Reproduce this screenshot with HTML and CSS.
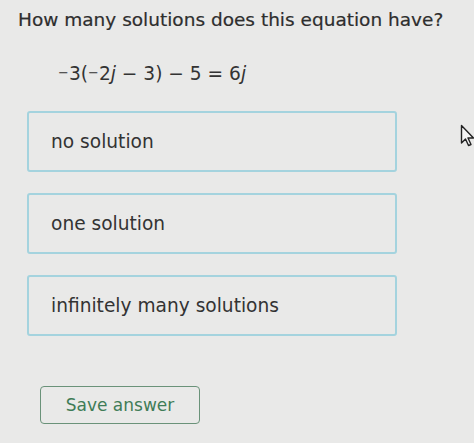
FILE: index.html
```html
<!DOCTYPE html>
<html lang="en">
<head>
<meta charset="utf-8">
<title>Question</title>
<link rel="stylesheet" href="styles.css">
</head>
<body>
<main class="question">
  <h1 class="prompt">How many solutions does this equation have?</h1>
  <p class="equation"><span class="neg">−</span>3(<span class="neg">−</span>2<i>j</i> − 3) − 5 = 6<i>j</i></p>
  <div class="options">
    <div class="option">no solution</div>
    <div class="option">one solution</div>
    <div class="option">infinitely many solutions</div>
  </div>
  <button class="save">Save answer</button>
</main>
<svg class="cursor" width="16" height="24" viewBox="0 0 16 24"><path d="M1.5 1.5 L1.5 19 L5.5 15 L8.5 21.5 L11 20.5 L8 14 L13.5 14 Z" fill="#f4f4f4" stroke="#222" stroke-width="1.4" stroke-linejoin="round"/></svg>
</body>
</html>
```
FILE: styles.css
```css
html, body {
  margin: 0;
  height: 100%;
}
body {
  background: #e9e9e8;
  font-family: "DejaVu Sans", Verdana, sans-serif;
  color: #2f2f2f;
  position: relative;
  overflow: hidden;
}
.question {
  padding: 8px 18px 0 18px;
  display: flex;
  flex-direction: column;
  align-items: flex-start;
}
.prompt {
  margin: 0;
  font-size: 18.5px;
  font-weight: normal;
  line-height: 24px;
  color: #2e2e2e;
  -webkit-text-stroke: 0.2px #2e2e2e;
}
.equation {
  margin: 29px 0 0 40px;
  font-size: 18.6px;
  line-height: 24px;
  color: #333;
}
.equation i {
  font-style: oblique;
}
.neg {
  font-size: 13px;
  vertical-align: 3px;
}
.options {
  margin: 25px 0 0 9px;
  display: flex;
  flex-direction: column;
  gap: 21px;
}
.option {
  width: 344px;
  height: 57px;
  border: 2px solid #a4d3de;
  border-radius: 3px;
  display: flex;
  align-items: center;
  padding-left: 22px;
  font-size: 18.6px;
  color: #333;
  box-sizing: content-box;
}
.save {
  margin: 50px 0 0 22px;
  width: 160px;
  height: 38px;
  border: 1.5px solid #6a9279;
  border-radius: 4px;
  background: transparent;
  font-family: "DejaVu Sans", Verdana, sans-serif;
  font-size: 17px;
  color: #3f7c57;
  padding: 0;
}
.cursor {
  position: absolute;
  left: 460px;
  top: 124px;
}
```
